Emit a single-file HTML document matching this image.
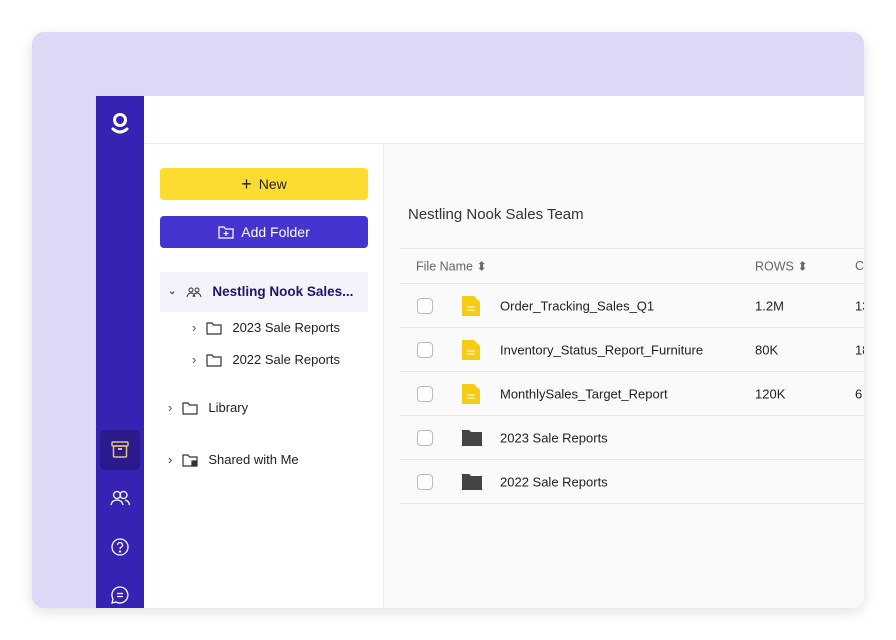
<!DOCTYPE html><html><head><style>
*{box-sizing:border-box;margin:0;padding:0}
body{width:896px;height:640px;background:#fff;font-family:"Liberation Sans",sans-serif;position:relative;overflow:hidden}
.card{position:absolute;left:32px;top:32px;width:832px;height:576px;background:#dcd9f6;border-radius:12px;overflow:hidden;box-shadow:0 4px 14px rgba(0,0,0,.12)}
.app{position:absolute;left:64px;top:64px;width:768px;height:512px;background:#fff}
.side{position:absolute;left:0;top:0;width:48px;height:512px;background:#3622b3}
.top{position:absolute;left:48px;top:0;right:0;height:48px;border-bottom:1px solid #ececec;background:#fff}
.left{position:absolute;left:48px;top:48px;width:240px;bottom:0;background:#fff;border-right:1px solid #ececec}
.main{position:absolute;left:288px;top:48px;right:0;bottom:0;background:#fafafa}
.btn{position:absolute;left:16px;width:208px;height:32px;border-radius:4px;display:flex;align-items:center;justify-content:center;font-size:14px;gap:7px}
.t{position:absolute;font-size:13px;color:#222;display:flex;align-items:center;gap:10px;white-space:nowrap}
.row{position:absolute;left:16px;right:0;height:44px;border-bottom:1px solid #e6e6e6;font-size:13px;color:#222}
.row>*{position:absolute;top:50%;transform:translateY(-50%)}
.cb{left:17px;width:16px;height:16px;border:1px solid #bbb;border-radius:4px;background:#fff}
</style></head><body>
<div class="card"><div class="app">
<div class="side">
<svg style="position:absolute;left:14px;top:16px" width="20" height="24" viewBox="0 0 20 24"><circle cx="10" cy="8" r="5.5" fill="none" stroke="#fff" stroke-width="3"/><path d="M3 17q7 6 14 0" fill="none" stroke="#fff" stroke-width="3" stroke-linecap="round"/></svg>
<div style="position:absolute;left:4px;top:334px;width:40px;height:40px;border-radius:5px;background:#2a1a8c"></div>
<svg style="position:absolute;left:15px;top:345px" width="18" height="17" viewBox="0 0 18 17" fill="none" stroke="#e2c27a" stroke-width="1.5"><rect x="1" y="1" width="16" height="4" rx="1"/><rect x="2.5" y="5" width="13" height="11" rx="1"/><path d="M7 8h4" stroke-width="2"/></svg>
<svg style="position:absolute;left:14px;top:394px" width="20" height="16" viewBox="0 0 20 16" fill="none" stroke="#fff" stroke-width="1.3"><circle cx="7" cy="5" r="3.5"/><path d="M1 15q1-5 6-5t6 5"/><circle cx="13.5" cy="5" r="3.5"/><path d="M15 10q4 1 4.5 5"/></svg>
<svg style="position:absolute;left:14px;top:441px" width="20" height="20" viewBox="0 0 20 20" fill="none" stroke="#fff" stroke-width="1.3"><circle cx="10" cy="10" r="8"/><path d="M7.5 8a2.5 2.5 0 1 1 3.5 2.3c-.7.3-1 .8-1 1.7"/><circle cx="10" cy="14.5" r=".5" fill="#fff"/></svg>
<svg style="position:absolute;left:14px;top:489px" width="20" height="20" viewBox="0 0 20 20" fill="none" stroke="#fff" stroke-width="1.3"><path d="M10 2a8 8 0 1 1-4 15l-4 1 1-4A8 8 0 0 1 10 2z"/><path d="M7 8.5h6M7 11.5h6"/></svg>
</div>
<div class="top"></div>
<div class="left">
<div class="btn" style="top:24px;background:#fddc32;color:#222"><span style="font-size:18px;font-weight:300">+</span>New</div>
<div class="btn" style="top:72px;background:#4634d1;color:#fff"><svg width="16" height="14" viewBox="0 0 16 14" fill="none" stroke="#fff" stroke-width="1.2"><path d="M1 2h5l1.5 2H15v9H1z"/><path d="M8 6v5M5.5 8.5h5"/></svg>Add Folder</div>
<div style="position:absolute;left:16px;top:128px;width:208px;height:40px;background:#f4f3fc"></div>
<div class="t" style="left:24px;top:140px;font-weight:bold;color:#1e1470;font-size:13.5px"><span style="font-size:10px;color:#555">⌄</span><svg width="16" height="12" viewBox="0 0 16 12" fill="none" stroke="#333" stroke-width="1"><circle cx="5" cy="4" r="2"/><circle cx="11" cy="4" r="2"/><path d="M1 11q1-4 4-4t4 4M7 11q1-4 4-4t4 4"/></svg>Nestling Nook Sales...</div>
<div class="t" style="left:48px;top:176px"><span style="color:#444">›</span><svg width="16" height="14" viewBox="0 0 16 14" fill="none" stroke="#333" stroke-width="1.2"><path d="M1 2h5l1.5 2H15v9H1z"/></svg>2023 Sale Reports</div>
<div class="t" style="left:48px;top:208px"><span style="color:#444">›</span><svg width="16" height="14" viewBox="0 0 16 14" fill="none" stroke="#333" stroke-width="1.2"><path d="M1 2h5l1.5 2H15v9H1z"/></svg>2022 Sale Reports</div>
<div class="t" style="left:24px;top:256px"><span style="color:#444">›</span><svg width="16" height="14" viewBox="0 0 16 14" fill="none" stroke="#333" stroke-width="1.2"><path d="M1 2h5l1.5 2H15v9H1z"/></svg>Library</div>
<div class="t" style="left:24px;top:308px"><span style="color:#444">›</span><svg width="16" height="14" viewBox="0 0 16 14" fill="none" stroke="#333" stroke-width="1.2"><path d="M1 2h5l1.5 2H15v9H1z"/><rect x="10" y="8" width="4" height="5" fill="#333"/></svg>Shared with Me</div>
</div>
<div class="main">
<div style="position:absolute;left:24px;top:62px;font-size:15px;color:#333">Nestling Nook Sales Team</div>
<div class="row" style="top:104px;height:36px;border-top:1px solid #e6e6e6;color:#666;font-size:12.5px"><span style="left:16px">File Name ⬍</span><span style="left:355px">ROWS ⬍</span><span style="left:455px">C</span></div>
<div class="row" style="top:140px"><div class="cb"></div><svg style="left:62px" width="18" height="20" viewBox="0 0 18 20"><path d="M0 0h12l6 6v14H0z" fill="#f7cc16"/><path d="M5 11h8M5 14h8" stroke="#fff" stroke-width="1"/></svg><span style="left:100px">Order_Tracking_Sales_Q1</span><span style="left:355px">1.2M</span><span style="left:455px">13</span></div>
<div class="row" style="top:184px"><div class="cb"></div><svg style="left:62px" width="18" height="20" viewBox="0 0 18 20"><path d="M0 0h12l6 6v14H0z" fill="#f7cc16"/><path d="M5 11h8M5 14h8" stroke="#fff" stroke-width="1"/></svg><span style="left:100px">Inventory_Status_Report_Furniture</span><span style="left:355px">80K</span><span style="left:455px">18</span></div>
<div class="row" style="top:228px"><div class="cb"></div><svg style="left:62px" width="18" height="20" viewBox="0 0 18 20"><path d="M0 0h12l6 6v14H0z" fill="#f7cc16"/><path d="M5 11h8M5 14h8" stroke="#fff" stroke-width="1"/></svg><span style="left:100px">MonthlySales_Target_Report</span><span style="left:355px">120K</span><span style="left:455px">6</span></div>
<div class="row" style="top:272px"><div class="cb"></div><svg style="left:62px" width="20" height="16" viewBox="0 0 20 16"><path d="M0 0h7l2 2h11v14H0z" fill="#444"/></svg><span style="left:100px">2023 Sale Reports</span></div>
<div class="row" style="top:316px"><div class="cb"></div><svg style="left:62px" width="20" height="16" viewBox="0 0 20 16"><path d="M0 0h7l2 2h11v14H0z" fill="#444"/></svg><span style="left:100px">2022 Sale Reports</span></div>
</div>
</div></div>
</body></html>
